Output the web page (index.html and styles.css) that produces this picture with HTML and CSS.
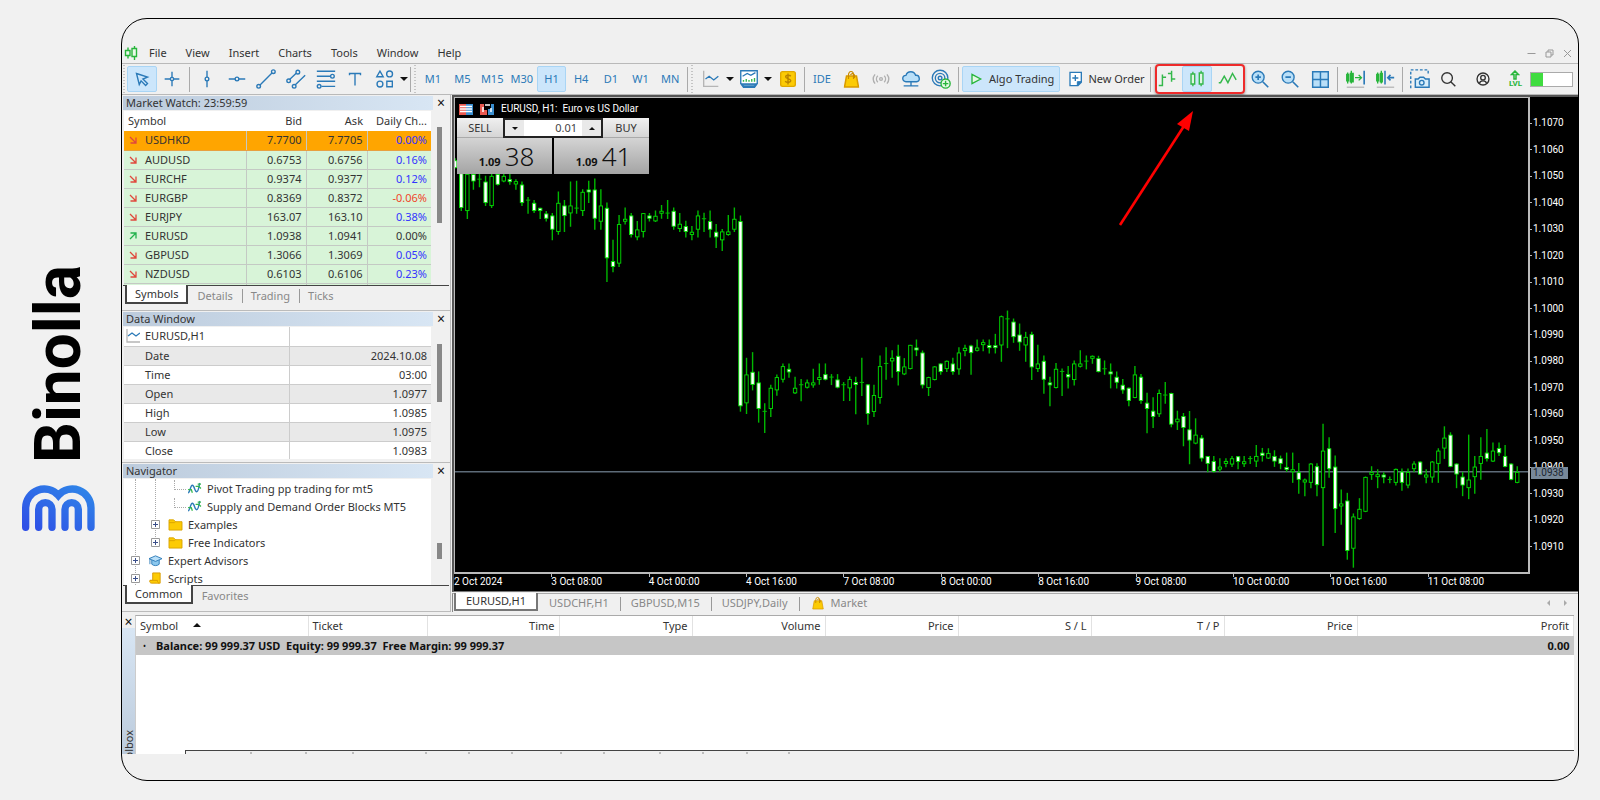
FILE: index.html
```html
<!DOCTYPE html>
<html lang="en">
<head>
<meta charset="utf-8">
<title>EURUSD, H1</title>
<link rel="stylesheet" href="styles.css">
</head>
<body>
<svg class="defs" aria-hidden="true">
  <defs>
    <linearGradient id="brandfill" x1="0" y1="1" x2="1" y2="0"><stop offset="0" stop-color="#2f4fe6"/><stop offset="1" stop-color="#2f86e8"/></linearGradient>
    <symbol id="down" viewBox="0 0 8 8"><path d="M1 1L7 7M7 1.500V7H1.500" fill="none" stroke="#e0473c" stroke-width="1.300"/></symbol>
    <symbol id="up" viewBox="0 0 8 8"><path d="M1 7L7 1M1.500 1H7V6.500" fill="none" stroke="#22b14c" stroke-width="1.300"/></symbol>
    <symbol id="folder" viewBox="0 0 16 14"><path d="M1 2h5l2 2h7v9H1z" fill="#fccb05" stroke="#d9a300"/><path d="M1 5h6l1.500-1.500" fill="none" stroke="#d9a300"/></symbol>
    <symbol id="indi" viewBox="0 0 14 12"><path d="M1 10C3 10 3 3 5 3s2 6 4 6 2-6 3-8" fill="none" stroke="#2b7ab8" stroke-width="1.300"/><path d="M1 7h3l1 3M8 4h3l2 2M10 2h3" fill="none" stroke="#34b84b" stroke-width="1.200"/></symbol>
    <symbol id="bag" viewBox="0 0 16 18"><path d="M3 6h10l2 11H1z" fill="#fccb05" stroke="#d99b00"/><path d="M5 9V5a2.500 3.500 0 0 1 5 0v4M7 5a2.500 3.500 0 0 1 4 0v3" fill="none" stroke="#c98a00" stroke-width="1.200"/></symbol>
    <symbol id="plusbox" viewBox="0 0 9 9"><path d="M.5 .5h8v8h-8z" fill="#fff" stroke="#9a9a9a"/><path d="M2 4.500h5M4.500 2v5" stroke="#3b4f8a"/></symbol>
  </defs>
</svg>
<div class="stage">
  <aside class="brand">
    <span class="brand-name">Binolla</span>
    <svg class="brand-logo" viewBox="63 732 225 144"><g fill="none" stroke="url(#brandfill)" stroke-width="22" stroke-linecap="round" stroke-linejoin="miter"><path d="M77 862V803A56 56 0 0 1 175 766A56 56 0 0 1 273 803V862M116 862V808A20 20 0 0 1 156 808V862M195 862V808A20 20 0 0 1 235 808V862"/></g></svg>
  </aside>

  <main class="frame">
    <header class="menubar">
      <svg class="app-icon" viewBox="0 0 14 14"><g fill="#e9f9e9" stroke="#27b53a" stroke-width="1.400"><path d="M4 1.500v11M10.500 0v14"/><path d="M1.500 4.500h4.500v5H1.500zM8 2.500h4.500v8H8z"/></g></svg>
      <nav class="menu">
        <button>File</button><button>View</button><button>Insert</button><button>Charts</button><button>Tools</button><button>Window</button><button>Help</button>
      </nav>
      <div class="winctl">
        <button aria-label="Minimize"><svg viewBox="0 0 9 9"><path d="M0.500 4.500h8"/></svg></button>
        <button aria-label="Restore"><svg viewBox="0 0 9 9"><path d="M1 3h5v5H1zM3 3V1h5v5H6"/></svg></button>
        <button aria-label="Close"><svg viewBox="0 0 9 9"><path d="M1 1l7 7M8 1L1 8"/></svg></button>
      </div>
    </header>

    <div class="toolbar">
      <span class="grip"></span>
      <div class="group g2">
        <button class="on" aria-label="Cursor"><svg viewBox="0 0 24 24"><path d="M6 6l12 4-5 2 5 5-2 2-5-5-2 4z"/></svg></button>
        <button aria-label="Crosshair"><svg viewBox="0 0 24 24"><path d="M12 4v6M12 14v6M4 12h6M14 12h6"/><circle cx="12" cy="12" r="1.800"/></svg></button>
      </div>
      <span class="sep"></span>
      <div class="group g7">
        <button aria-label="Vertical line"><svg viewBox="0 0 24 24"><path d="M12 3v7M12 14v7"/><circle cx="12" cy="12" r="2"/></svg></button>
        <button aria-label="Horizontal line"><svg viewBox="0 0 24 24"><path d="M3 12h7M14 12h7"/><circle cx="12" cy="12" r="2"/></svg></button>
        <button aria-label="Trendline"><svg viewBox="0 0 24 24"><path d="M5.500 18.500L18.500 5.500"/><circle cx="4" cy="20" r="2"/><circle cx="20" cy="4" r="2"/></svg></button>
        <button aria-label="Channel"><svg viewBox="0 0 24 24"><path d="M5 12.500l7.500-7M11 18.500L22 8"/><circle cx="4" cy="14" r="2"/><circle cx="14" cy="4.500" r="2"/><circle cx="10" cy="20" r="2"/></svg></button>
        <button aria-label="Fibonacci"><svg viewBox="0 0 24 24"><path d="M2 3.500h20M2 9h15M2 14.500h20M7 20h15"/><circle cx="19" cy="9" r="2"/><circle cx="4.500" cy="20" r="2"/></svg></button>
        <button aria-label="Text"><svg viewBox="0 0 24 24"><path d="M6 8V6h12v2M12 6v13"/></svg></button>
        <button aria-label="Shapes"><svg viewBox="0 0 24 24"><path d="M6.500 3.500l3.500 6H3zM14 14.500h6v6h-6z"/><circle cx="17" cy="6.500" r="3.200"/><circle cx="6.500" cy="17.500" r="3.200"/></svg></button>
      </div>
      <span class="caret"></span>
      <span class="sep"></span><span class="grip"></span>
      <div class="group g9">
        <button>M1</button><button>M5</button><button>M15</button><button>M30</button><button class="on">H1</button><button>H4</button><button>D1</button><button>W1</button><button>MN</button>
      </div>
      <span class="sep"></span><span class="grip"></span>
      <div class="group pairs">
        <button aria-label="Chart type"><svg viewBox="0 0 24 24"><path d="M4 3v17h16" stroke="#b5b5b5"/><path d="M6 12l4-3 5 4 5-4"/></svg></button><span class="caret"></span>
        <button aria-label="Indicators"><svg viewBox="0 0 24 24"><path d="M3 3h18v14l-3 4H6l-3-4z" fill="#fff"/><path d="M4 17.500h16L17.500 20.500h-11z" fill="#5b9bc8"/><path d="M5 9l5-3 4 2 5-3"/><path d="M6 15v-2M9 15v-3M12 15v-2M15 15v-3M18 15v-4" stroke="#34b84b"/></svg></button><span class="caret"></span>
        <button aria-label="Trading"><svg viewBox="0 0 24 24"><rect x="4" y="4" width="16" height="16" rx="2" fill="#fccb05" stroke="#e0a800"/><path d="M15 9c-1-1.500-5.500-1.500-5.500.7s5.500 1.500 5.500 4-5 2.300-6 .6M12 6v12" stroke="#b98300"/></svg></button>
      </div>
      <span class="sep"></span>
      <div class="group g5">
        <button>IDE</button>
        <button class="market-icon" aria-label="Market"><svg viewBox="0 0 16 18"><use href="#bag"/></svg></button>
        <button aria-label="Signals"><svg viewBox="0 0 24 24"><g stroke="#b0b0b0"><circle cx="12" cy="12" r="1.500"/><path d="M8.500 8.500a5 5 0 0 0 0 7M15.500 8.500a5 5 0 0 1 0 7M5.500 7a8 8 0 0 0 0 10M18.500 7a8 8 0 0 1 0 10"/></g></svg></button>
        <button aria-label="Cloud"><svg viewBox="0 0 24 24"><path d="M6.500 15a3.500 3.500 0 0 1 0-7 5.500 5.500 0 0 1 10.500 0 3.500 3.500 0 0 1 1 7z" fill="#b9dff8"/><path d="M12 15v4M4 19.500h16"/></svg></button>
        <button aria-label="Copy trading"><svg viewBox="0 0 24 24"><circle cx="11" cy="11" r="8.500"/><circle cx="11" cy="11" r="5.200"/><circle cx="11" cy="11" r="2"/><circle cx="17" cy="17" r="5" fill="#e4f8e4" stroke="#27b53a"/><path d="M17 14v6M14 17h6" stroke="#27b53a"/></svg></button>
      </div>
      <span class="sep"></span>
      <button class="wide on"><svg viewBox="0 0 24 24"><path d="M6 5l13 7-13 7z" fill="#e4f8e4" stroke="#27b53a" stroke-width="2"/></svg>Algo Trading</button>
      <button class="wide"><svg viewBox="0 0 24 24"><path d="M3 2h17v15l-5 5H3z" fill="#fff" stroke-width="2"/><path d="M20 16h-6v6z" fill="#2b7ab8"/><path d="M11 6v9M6.500 10.500h9" stroke-width="2"/></svg>New Order</button>
      <span class="sep"></span>
      <div class="group g3 marked">
        <button aria-label="Bar chart"><svg viewBox="0 0 24 24"><path d="M3 19h4M7 7v13M7 10h4M13 6h4M17 3v12M17 12h4" stroke="#34b84b" stroke-width="1.600"/></svg></button>
        <button class="on" aria-label="Candlesticks"><svg viewBox="0 0 24 24"><path d="M7.500 4v16M16.500 3v17" stroke="#34b84b"/><path d="M5.500 6.500h4v11h-4zM14.500 5.500h4v12h-4z" fill="#dff5e3" stroke="#34b84b" stroke-width="1.500"/></svg></button>
        <button aria-label="Line chart"><svg viewBox="0 0 24 24"><path d="M3 16h2l4-7 4 7 5-10 4 7" stroke="#34b84b" stroke-width="1.600"/></svg></button>
      </div>
      <div class="group g3">
        <button aria-label="Zoom in"><svg viewBox="0 0 24 24"><circle cx="10" cy="10" r="6.500" fill="#b9dff8"/><path d="M15 15l6 6M10 7v6M7 10h6" stroke-width="1.800"/></svg></button>
        <button aria-label="Zoom out"><svg viewBox="0 0 24 24"><circle cx="10" cy="10" r="6.500" fill="#b9dff8"/><path d="M15 15l6 6M7 10h6" stroke-width="1.800"/></svg></button>
        <button aria-label="Tile windows"><svg viewBox="0 0 24 24"><path d="M4 4h17v17H4zM12.500 4v17M4 12.500h17" fill="#b9dff8" stroke-width="1.600"/></svg></button>
      </div>
      <span class="sep"></span>
      <div class="group g2">
        <button aria-label="Auto scroll"><svg viewBox="0 0 24 24"><path d="M4 5v12M8 3v14" stroke="#27b53a"/><path d="M3 7h2v7H3zM7 6h3v9H7z" fill="#27b53a" stroke="#27b53a"/><path d="M12 10.500h7M16 7.500l3 3-3 3" stroke="#27b53a"/><path d="M22 3v15" stroke-width="1.800"/><path d="M3 21h19" stroke="#bdbdbd"/></svg></button>
        <button aria-label="Chart shift"><svg viewBox="0 0 24 24"><path d="M4 5v12M8 3v14" stroke="#27b53a"/><path d="M3 7h2v7H3zM7 6h2v9H7z" fill="#27b53a" stroke="#27b53a"/><path d="M12 3v15M22 10.500h-7M18 7.500l-3 3 3 3" stroke-width="1.700"/><path d="M3 21h19" stroke="#bdbdbd"/></svg></button>
      </div>
      <span class="sep"></span>
      <div class="group last">
        <button aria-label="Screenshot"><svg viewBox="0 0 24 24"><path d="M3 22V2h19v5" stroke-dasharray="3 2"/><path d="M8 21v-9h3l2-2h4l2 2h4v9z" fill="#d8eefb" stroke-width="1.600"/><circle cx="15" cy="16" r="2.500"/></svg></button>
        <button aria-label="Search"><svg viewBox="0 0 24 24"><g stroke="#333"><circle cx="11" cy="11" r="5.800"/><path d="M15 15l5 5"/></g></svg></button>
        <button aria-label="Account"><svg viewBox="0 0 24 24"><g stroke="#333"><circle cx="12" cy="12" r="6.500"/><circle cx="12" cy="10.500" r="2.500"/><path d="M8 17c1-4 7-4 8 0"/></g></svg></button>
        <span class="lvl"><svg viewBox="0 0 10 10"><path d="M5 1l3.500 3.500H6V9H4V4.500H1.500z"/></svg>LVL</span>
        <span class="level"><span></span></span>
      </div>
    </div>

    <div class="workspace">
      <div class="side">
        <section class="panel market">
          <div class="title"><h2>Market Watch: 23:59:59</h2><button aria-label="Close">×</button></div>
          <div class="body">
            <table class="quotes">
              <colgroup><col class="c-sym"><col class="c-bid"><col class="c-ask"><col></colgroup>
              <thead><tr><th>Symbol</th><th>Bid</th><th>Ask</th><th>Daily Ch...</th></tr></thead>
              <tbody>
                <tr class="hot"><td><svg><use href="#down"/></svg>USDHKD</td><td>7.7700</td><td>7.7705</td><td class="pos">0.00%</td></tr>
                <tr><td><svg><use href="#down"/></svg>AUDUSD</td><td>0.6753</td><td>0.6756</td><td class="pos">0.16%</td></tr>
                <tr><td><svg><use href="#down"/></svg>EURCHF</td><td>0.9374</td><td>0.9377</td><td class="pos">0.12%</td></tr>
                <tr><td><svg><use href="#down"/></svg>EURGBP</td><td>0.8369</td><td>0.8372</td><td class="neg">-0.06%</td></tr>
                <tr><td><svg><use href="#down"/></svg>EURJPY</td><td>163.07</td><td>163.10</td><td class="pos">0.38%</td></tr>
                <tr><td><svg><use href="#up"/></svg>EURUSD</td><td>1.0938</td><td>1.0941</td><td>0.00%</td></tr>
                <tr><td><svg><use href="#down"/></svg>GBPUSD</td><td>1.3066</td><td>1.3069</td><td class="pos">0.05%</td></tr>
                <tr><td><svg><use href="#down"/></svg>NZDUSD</td><td>0.6103</td><td>0.6106</td><td class="pos">0.23%</td></tr>
                <tr><td></td><td></td><td></td><td></td></tr>
              </tbody>
            </table>
            <div class="track"><span class="thumb thumb-quotes"></span></div>
          </div>
          <div class="tabs"><button class="active">Symbols</button><button>Details</button><button>Trading</button><button>Ticks</button></div>
        </section>

        <section class="panel data">
          <div class="title"><h2>Data Window</h2><button aria-label="Close">×</button></div>
          <div class="body">
            <table class="values">
              <colgroup><col class="c-name"><col></colgroup>
              <tbody>
                <tr><td><svg class="mini" viewBox="0 0 14 14"><path d="M1 0v13h13" stroke="#b5b5b5"/><path d="M2 7l4-3 4 3 4-3" stroke="#2b7ab8"/></svg>EURUSD,H1</td><td></td></tr>
                <tr><td>Date</td><td>2024.10.08</td></tr>
                <tr><td>Time</td><td>03:00</td></tr>
                <tr><td>Open</td><td>1.0977</td></tr>
                <tr><td>High</td><td>1.0985</td></tr>
                <tr><td>Low</td><td>1.0975</td></tr>
                <tr><td>Close</td><td>1.0983</td></tr>
              </tbody>
            </table>
            <div class="track"><span class="thumb thumb-values"></span></div>
          </div>
        </section>

        <section class="panel navigator">
          <div class="title"><h2>Navigator</h2><button aria-label="Close">×</button></div>
          <div class="body">
            <ul class="tree">
              <li class="l3"><svg><use href="#indi"/></svg>Pivot Trading pp trading for mt5</li>
              <li class="l3 end"><svg><use href="#indi"/></svg>Supply and Demand Order Blocks MT5</li>
              <li class="l2"><svg class="box"><use href="#plusbox"/></svg><svg><use href="#folder"/></svg>Examples</li>
              <li class="l2"><svg class="box"><use href="#plusbox"/></svg><svg><use href="#folder"/></svg>Free Indicators</li>
              <li class="l1"><svg class="box"><use href="#plusbox"/></svg><svg viewBox="0 0 16 14"><path d="M4 6v5c2 2 6 2 8 0V6" fill="#8cc8ee" stroke="#2b7ab8"/><path d="M1 5l7-3 7 3-7 3zM2 5v6" fill="#b9dff8" stroke="#2b7ab8"/></svg>Expert Advisors</li>
              <li class="l1"><svg class="box"><use href="#plusbox"/></svg><svg viewBox="0 0 16 14"><path d="M5 1h8v11H4a2 2 0 0 1-2-3h3z" fill="#fccb05" stroke="#d99b00"/><path d="M2 9h8c0 2 1 3 2 3" fill="#fccb05" stroke="#d99b00"/></svg>Scripts</li>
            </ul>
            <div class="track"><span class="thumb thumb-tree"></span></div>
          </div>
          <div class="tabs"><button class="active">Common</button><button>Favorites</button></div>
        </section>
      </div>

      <div class="center">
        <section class="chart">
          <div class="plot">
            <svg class="candles" id="candles" viewBox="455 98 1075 475" preserveAspectRatio="none"></svg>
            <div class="chart-title">
              <svg viewBox="0 0 14 11"><path d="M0 0h7v11H0z" fill="#e8584f"/><path d="M7 0h7v11H7z" fill="#3b8fd0"/><path d="M1 2.500h12M1 5h12M1 7.500h12" stroke="#fff" stroke-width="1.300"/></svg>
              <svg viewBox="0 0 14 11"><path d="M0 0h4v6h3v5H0z" fill="#e8584f"/><path d="M14 0h-3v5H8v6h6z" fill="#3b8fd0"/><path d="M5 1h5M3 3v5M11 4v4" stroke="#fff" stroke-width="1.500"/></svg>
              <span>EURUSD, H1:&nbsp; Euro vs US Dollar</span>
            </div>
            <div class="trade">
              <div class="trade-top">
                <button>SELL</button>
                <div class="lot"><button aria-label="Decrease volume"><span class="caret small"></span></button><input type="text" value="0.01" aria-label="Volume"><button aria-label="Increase volume"><span class="caret small flip"></span></button></div>
                <button>BUY</button>
              </div>
              <div class="trade-px"><div><b>1.09</b><span>38</span></div><div><b>1.09</b><span>41</span></div></div>
            </div>
          </div>
          <div class="prices">
            <span>1.1070</span><span>1.1060</span><span>1.1050</span><span>1.1040</span><span>1.1030</span><span>1.1020</span><span>1.1010</span><span>1.1000</span><span>1.0990</span><span>1.0980</span><span>1.0970</span><span>1.0960</span><span>1.0950</span><span>1.0940</span><span>1.0930</span><span>1.0920</span><span>1.0910</span>
            <em class="now">1.0938</em>
          </div>
          <div class="times">
            <span>2 Oct 2024</span><span>3 Oct 08:00</span><span>4 Oct 00:00</span><span>4 Oct 16:00</span><span>7 Oct 08:00</span><span>8 Oct 00:00</span><span>8 Oct 16:00</span><span>9 Oct 08:00</span><span>10 Oct 00:00</span><span>10 Oct 16:00</span><span>11 Oct 08:00</span>
          </div>
          <svg class="arrow" viewBox="0 0 80 120"><path d="M4 116L68 17" stroke="#f00" stroke-width="2.600"/><path d="M77 2L73 22 61 15z" fill="#f00"/></svg>
        </section>
        <div class="tabs chart-tabs">
          <button class="active">EURUSD,H1</button><button>USDCHF,H1</button><button>GBPUSD,M15</button><button>USDJPY,Daily</button><button class="shop"><svg><use href="#bag"/></svg>Market</button>
          <span class="pager"><i></i><i></i></span>
        </div>
      </div>
    </div>

    <section class="toolbox">
      <div class="tb-side"><button aria-label="Close">×</button><div class="tb-strip"><div class="tb-label"><span>Toolbox</span></div></div></div>
      <div class="tb-main">
        <table class="trades">
          <colgroup><col class="w-sym"><col class="w-tic"><col class="w-time"><col class="w"><col class="w"><col class="w"><col class="w"><col class="w"><col class="w"><col></colgroup>
          <thead><tr><th>Symbol<span class="caret flip"></span></th><th>Ticket</th><th>Time</th><th>Type</th><th>Volume</th><th>Price</th><th>S / L</th><th>T / P</th><th>Price</th><th>Profit</th></tr></thead>
          <tbody><tr><td colspan="9"><i>•</i>Balance: 99 999.37 USD&nbsp; Equity: 99 999.37&nbsp; Free Margin: 99 999.37</td><td>0.00</td></tr></tbody>
        </table>
        <div class="tb-foot"><svg viewBox="0 0 640 3"><path d="M65 1v2M120 1v2M167 1v2M240 1v2M283 1v2M326 1v2M375 1v2M418 1v2M474 1v2M517 1v2M561 1v2M603 1v2" stroke="#888"/></svg></div>
      </div>
    </section>
  </main>
</div>
<script src="chart.js"></script>
</body>
</html>
```
FILE: styles.css
```css
* { box-sizing: border-box; }
body { margin: 0; background: #f1f1f1; color: #333; font: 11px/14px "Noto Sans", "Open Sans", sans-serif; }
button { margin: 0; padding: 0; border: 0; background: none; font: inherit; color: inherit; }
h2 { margin: 0; font: inherit; }
table { border-collapse: collapse; table-layout: fixed; width: 100%; }
th { font-weight: 400; }
svg { display: block; flex: none; }
.defs { position: absolute; width: 0; height: 0; }

.stage { display: grid; grid-template-columns: 121px 1fr; height: 100vh; min-height: 700px; padding: 18px 21px 19px 0; }

.brand { display: flex; flex-direction: column; align-items: center; justify-content: center; gap: 22px; padding: 0 4px 2px 0; }
.brand-name { writing-mode: vertical-rl; transform: rotate(180deg); font: 700 64px/64px Roboto, sans-serif; color: #000; }
.brand-logo { width: 75px; height: 48px; }

.frame { display: flex; flex-direction: column; min-width: 0; overflow: hidden; border: 1px solid #000; border-radius: 26px; padding: 24px 0 26px; background: #f0f0f0; }

.menubar { display: flex; align-items: center; height: 21px; padding: 0 6px 0 2px; border-bottom: 1px solid #b9b9b9; }
.app-icon { width: 14px; height: 14px; }
.menu { display: flex; gap: 19px; margin-left: 11px; }
.winctl { display: flex; gap: 9px; margin-left: auto; }
.winctl svg { width: 9px; height: 9px; fill: none; stroke: #999; }

.toolbar { display: flex; align-items: center; height: 31px; border-bottom: 1px solid #b9b9b9; color: #2b7ab8; }
.toolbar svg { width: 22px; height: 22px; fill: none; stroke: #2b7ab8; stroke-width: 1.500; }
.toolbar .market-icon svg { width: 17px; height: 18px; }
.toolbar button { display: flex; align-items: center; justify-content: center; height: 26px; border: 1px solid transparent; border-radius: 2px; }
.toolbar .on { background: #cce6fb; border-color: #a9d5f5; }
.group { display: grid; flex: none; }
.g2 { grid-template-columns: 1fr 1fr; width: 60px; }
.g3 { grid-template-columns: repeat(3, 1fr); width: 89px; }
.g5 { grid-template-columns: repeat(5, 1fr); width: 149px; }
.g7 { grid-template-columns: repeat(7, 1fr); width: 208px; }
.g9 { grid-template-columns: repeat(9, 1fr); width: 267px; }
.marked { position: relative; margin-right: 4px; }
.marked::after { content: ""; position: absolute; inset: -2px -3px -2px 2px; border: 2px solid #ee2b2b; border-radius: 4px; box-shadow: 0 1px 3px #0006; }
.sep { flex: none; width: 1px; height: 25px; margin: 0 2px; background: #aaa; }
.grip { flex: none; width: 2px; height: 28px; margin: 0 2px 0 1px; background: repeating-linear-gradient(#c4c4c4 0 1px, transparent 1px 3px); }
.caret { flex: none; display: inline-block; border: 4px solid transparent; border-top-color: #111; border-bottom: 0; }
.caret.flip { border-bottom: 4px solid #111; border-top: 0; }
.caret.small { border-left-width: 3px; border-right-width: 3px; border-top-width: 3px; }
.caret.small.flip { border-bottom-width: 3px; border-top-width: 0; }
.pairs { display: flex; align-items: center; gap: 3px; padding: 0 2px 0 4px; }
.pairs button { width: 24px; }
.pairs button:last-child { margin-left: 1px; }
.wide { flex: none; gap: 4px; padding: 0 2px 0 5px; color: #333; }
.toolbar .wide svg { width: 16px; height: 16px; }
.toolbar .wide.on { padding: 0 5px; margin: 0 2px 0 1px; gap: 5px; }
.last { display: flex; flex: 1; align-items: center; padding-right: 5px; }
.last button { flex: none; width: 29px; }
.last button:nth-child(3) { margin-left: 6px; }
.lvl { display: flex; flex-direction: column; align-items: center; margin-left: auto; color: #27b53a; font: 700 8px/8px Roboto, sans-serif; }
.toolbar .lvl svg { width: 10px; height: 10px; stroke: #27b53a; fill: #e4f8e4; }
.level { width: 43px; height: 15px; margin-left: 8px; border: 1px solid #aaa; background: #fff; }
.level span { display: block; width: 30%; height: 100%; background: #3fdc3f; }

.workspace { display: flex; flex: 1; min-height: 0; }
.side { display: flex; flex-direction: column; flex: none; width: 329px; border-right: 1px solid #bbb; }
.panel { display: flex; flex-direction: column; min-height: 0; padding: 1px 1px 0 1px; border-bottom: 1px solid #bbb; }
.market { flex: 218 1 0; }
.data { flex: 149 1 0; padding-bottom: 3px; }
.navigator { flex: 149 1 0; padding-bottom: 1px; }
.title { display: flex; flex: none; align-items: flex-start; height: 15px; }
.title h2 { flex: 1; height: 14px; padding-left: 3px; background: linear-gradient(90deg, #bccbdc, #d8e6f4); }
.title button { width: 16px; font-size: 14px; line-height: 14px; color: #111; }
.body { display: flex; flex: 1; min-height: 0; overflow: hidden; padding-left: 1px; }
.body > table, .tree { flex: 1; align-self: flex-start; background: #fff; }
.track { flex: none; width: 18px; padding-left: 6px; }
.thumb { display: block; width: 5px; background: #888; }
.thumb-quotes { height: 96px; margin-top: 16px; }
.thumb-values { height: 58px; margin-top: 17px; }
.thumb-tree { height: 16px; margin-top: 64px; }

.quotes th { height: 20px; padding: 0 4px; text-align: right; }
.quotes th:first-child { text-align: left; }
.quotes td { height: 19px; padding: 0 4px; text-align: right; background: #d8f4d8; border-bottom: 1px solid #c4c9c4; border-right: 1px solid #c4c9c4; }
.quotes td:last-child { border-right: 0; }
.quotes td:first-child { text-align: left; padding-left: 5px; }
.quotes svg { display: inline-block; width: 8px; height: 8px; margin-right: 8px; }
.quotes .hot td { background: #ffa500; border-bottom-color: #e8a040; }
.quotes .pos { color: #33f; }
.quotes .neg { color: #f0452b; }
.c-sym { width: 122px; } .c-bid { width: 60px; } .c-ask { width: 61px; }
.values td { height: 19px; padding: 0 4px; text-align: right; border-bottom: 1px solid #ccc; }
.values td:first-child { position: relative; padding-left: 21px; text-align: left; border-right: 1px solid #ccc; }
.values tr:nth-child(even) { background: #e9e9e9; }
.c-name { width: 165px; }
.mini { position: absolute; left: 2px; top: 2px; width: 14px; height: 14px; fill: none; stroke-width: 1.300; }

.tree { position: relative; margin: 0; padding: 1px 0 0; list-style: none; height: 112px; }
.tree::before, .tree::after { content: ""; position: absolute; top: 0; border-left: 1px dotted #aaa; }
.tree::before { left: 11px; height: 112px; }
.tree::after { left: 31px; height: 66px; }
.tree li { position: relative; display: flex; align-items: center; gap: 5px; height: 18px; }
.tree li svg { width: 15px; height: 13px; }
.tree li .box { z-index: 1; width: 9px; height: 9px; margin-right: 3px; }
.tree .l1 { padding-left: 7px; } .tree .l2 { padding-left: 27px; } .tree .l3 { padding-left: 63px; }
.tree .l3::before { content: ""; position: absolute; left: 50px; top: 0; width: 11px; height: 9px; border-left: 1px dotted #aaa; border-bottom: 1px dotted #aaa; }

.tabs { display: flex; flex: none; height: 25px; border-top: 1px solid #444; color: #888; }
.tabs button { height: 19px; padding: 0 9px; }
.tabs button + button { position: relative; }
.tabs .active { margin: -1px 0 0 2px; padding: 0 8px; background: #fff; color: #333; border: 1px solid #444; border-top: 0; border-width: 0 2px 2px; }
.tabs button + button + button::before { content: ""; position: absolute; left: 0; top: 3px; height: 14px; border-left: 1px solid #999; }

.center { display: flex; flex-direction: column; flex: 1; min-width: 0; }
.chart { position: relative; display: grid; grid-template: 1fr 17px / 1fr 48px; flex: 1; min-height: 0; margin-left: 1px; border: 2px solid #555; border-right: 0; border-bottom: 1px solid #777; background: #000; color: #fff; font: 10px/12px Roboto, sans-serif; }
.plot { position: relative; min-width: 0; min-height: 0; border: 1px solid #bbb; border-width: 1px 2px 2px 1px; }
.candles { position: absolute; inset: 0; width: 100%; height: 100%; }
.chart-title { position: relative; display: flex; align-items: center; gap: 7px; padding: 5px 0 3px 4px; }
.chart-title svg { width: 14px; height: 11px; }
.trade { position: relative; width: 192px; margin-left: 2px; color: #333; }
.trade-top { display: flex; height: 20px; background: linear-gradient(#f0f0f0, #d4d4d4); font: 11px/14px "Noto Sans", sans-serif; }
.trade-top > button { flex: 1; border-bottom: 1px solid #aaa; }
.lot { display: flex; flex: none; width: 100px; border: 2px solid #222; }
.lot button { display: flex; align-items: center; justify-content: center; width: 19px; background: #e9e9e9; }
.lot input { flex: 1; min-width: 0; border: 0; padding: 0 5px; background: #fff; font: inherit; color: #444; text-align: right; }
.trade-px { display: grid; grid-template-columns: 1fr 1fr; gap: 2px; background: #000; }
.trade-px div { display: flex; align-items: baseline; justify-content: center; gap: 4px; height: 36px; padding-left: 4px; background: linear-gradient(#d4d4d4, #a4a4a4); color: #111; font: 26px/36px "Noto Sans", sans-serif; }
.trade-px span { font-weight: 300; }
.trade-px b { font-size: 11px; }
.prices { position: relative; display: grid; grid-auto-rows: 1fr; padding: 13px 0 14px; }
.prices span { display: flex; align-items: center; gap: 1px; }
.prices span::before { content: ""; width: 2px; border-top: 1px solid #bbb; }
.now { position: absolute; left: 1px; top: 79%; margin-top: -7px; width: 37px; padding-left: 2px; background: #778899; color: #1b2530; font-style: normal; }
.times { grid-column: 1; display: grid; grid-template-columns: repeat(11, 1fr); padding-right: 5px; white-space: nowrap; }
.times span { position: relative; padding-top: 2px; }
.times span + span::before { content: ""; position: absolute; left: 0; top: 0; height: 3px; border-left: 1px solid #bbb; }
.arrow { position: absolute; right: 382px; top: 12px; width: 80px; height: 120px; fill: none; }

.chart-tabs { height: 19px; margin-top: 1px; border-top-color: #aaa; border-left: 1px solid #888; margin-left: 1px; }
.chart-tabs button { padding: 0 11px; height: 18px; }
.chart-tabs .active { margin-left: 1px; padding: 0 10px; border-color: #777; }
.chart-tabs .shop { display: flex; align-items: center; gap: 7px; padding-left: 13px; }
.shop svg { width: 12px; height: 14px; }
.pager { display: flex; align-items: center; gap: 14px; margin-left: auto; padding-right: 11px; }
.pager i { border: 3px solid transparent; border-right-color: #aaa; border-left: 0; }
.pager i + i { border-left: 3px solid #aaa; border-right: 0; }

.toolbox { display: flex; flex: none; height: 139px; margin: 3px 4px 0 0; }
.tb-side { display: flex; flex-direction: column; width: 13px; }
.tb-side button { height: 13px; font-size: 14px; line-height: 12px; color: #111; }
.tb-strip { display: flex; flex: 1; flex-direction: column; justify-content: flex-end; background: linear-gradient(#d8e6f4, #bccbdc); }
.tb-label { height: 24px; overflow: hidden; }
.tb-label span { writing-mode: vertical-rl; transform: rotate(180deg); line-height: 13px; }
.tb-main { display: flex; flex: 1; flex-direction: column; min-width: 0; border-top: 1px solid #aaa; border-left: 1px solid #ccc; background: #fff; }
.trades th { height: 20px; padding: 0 4px; text-align: right; border-right: 1px solid #e2e2e2; }
.trades th:nth-child(-n+2) { text-align: left; }
.trades th .caret { margin: 0 0 3px 15px; }
.trades td { height: 19px; padding: 0 4px; background: #c6c6c6; color: #111; font-weight: 700; }
.trades td:last-child { text-align: right; }
.trades i { display: inline-block; width: 14px; padding-left: 3px; margin-right: 2px; font: 8px/8px "Noto Sans", sans-serif; vertical-align: 1px; }
.w-sym { width: 172px; } .w-tic { width: 119px; } .w-time { width: 132px; } .w { width: 133px; }
.tb-foot { margin: auto 0 0 49px; height: 4px; border-top: 1px solid #444; border-left: 1px solid #444; background: #f0f0f0; }
.tb-foot svg { width: 640px; height: 3px; }
```
FILE: chart.js
```js
// Hourly candles: [high, bodyTop, bodyBottom, low, kind], in thirds of a pixel below the block's base line.
// kind: 1 = falling (filled), 0 = rising (hollow), 2 = doji
const blocks = [
  { first: -1, base: 90, bars: [
    [205,211,235,235,1],[200,250,355,364,1],[250,252,364,388,0],[250,252,275,300,1],[250,268,268,292,2],[258,275,340,349,1],
    [250,258,349,355,0],[250,252,285,287,1],[252,258,275,277,0],[252,268,275,285,1],[268,274,284,300,0],[275,284,340,349,1],
    [322,331,331,372,2],[331,339,364,370,1],[354,354,364,388,1],[364,371,387,395,1],[370,377,420,452,1],[305,339,427,435,0],
    [331,347,379,427,1],[275,347,371,411,0],[273,355,355,372,2],[298,306,364,379,0],[273,299,308,340,1],[266,299,387,420,1],
    [298,347,396,420,0],[338,354,506,577,1],[450,514,532,548,1],[376,403,522,532,0],[353,387,393,404,0],[370,377,436,443,1],
    [394,419,443,452,0],[370,370,427,443,0],[370,377,387,395,1],[362,378,395,397,0],[346,363,371,387,0],[331,370,370,388,2],
    [353,363,411,420,1],[370,402,418,427,0],[393,409,427,443,1],[409,426,436,452,0],[362,377,420,443,0],[369,387,387,427,2],
    [362,394,420,443,1],[403,426,443,475,1],[418,425,452,484,0],[376,425,436,438,0],[353,387,420,427,0],[377,394,951,967,1],
    [805,855,942,974,0],[788,847,887,903,1],[846,879,959,1000,1],[942,966,966,1031,2],[886,895,959,983,0],[855,863,903,919,0],
    [822,830,871,879,0],[822,838,849,865,1],[862,895,912,914,0],[869,886,886,936,2],[870,879,895,897,0],[838,879,886,895,0],
    [822,863,871,886,0],[822,854,871,873,1],[854,863,863,887,2],[854,870,895,897,1]
  ]},
  { first: 63, base: 290, bars: [
    [278,286,286,335,2],[261,269,297,335,0],[262,278,287,375,1],[205,279,279,320,2],[284,285,374,406,1],[286,317,368,383,0],
    [198,230,326,343,0],[173,222,222,271,2],[182,205,216,265,0],[166,199,248,288,1],[206,231,255,257,0],[166,166,239,240,0],
    [150,174,183,200,1],[183,189,288,297,1],[262,263,296,320,0],[230,231,272,273,0],[221,222,248,256,1],[213,214,239,248,0],
    [205,222,248,256,1],[173,189,240,256,0],[166,175,185,200,0],[166,168,191,256,1],[150,174,184,186,0],[150,158,167,185,0],
    [150,167,175,192,1],[133,167,175,192,1],[78,80,168,217,0],[63,88,88,176,2],[87,96,143,160,1],[102,135,159,184,1],
    [127,142,168,217,0],[127,134,234,272,1],[166,222,239,248,0],[198,214,271,313,1],[262,279,288,351,1],[221,238,296,297,0],
    [237,246,246,320,2],[230,254,264,297,1],[213,222,272,288,0],[182,222,232,234,0],[198,215,215,240,2],[198,199,206,223,0],
    [199,206,248,249,1],[213,238,238,256,2],[222,246,255,297,1],[246,262,280,297,1],[269,286,303,313,1],[294,295,335,351,1],
    [230,255,326,327,0],[254,262,335,343,1],[310,340,359,432,1],[324,364,383,416,1],[300,311,375,383,0],[278,317,317,343,2],
    [310,311,406,414,1],[364,388,399,422,0]
  ]},
  { first: 119, base: 390, bars: [
    [71,80,116,171,1],[65,120,154,225,1],[87,136,163,165,0],[137,145,208,217,1],[200,200,224,249,1],[200,215,248,250,1],
    [207,232,239,248,0],[207,215,222,234,0],[200,207,226,233,0],[200,201,218,240,1],[200,216,222,233,0],[200,208,208,224,2],
    [167,200,217,233,0],[176,190,200,217,1],[177,191,208,209,0],[183,200,217,233,1],[199,207,224,240,1],[190,233,240,248,1],
    [190,240,247,281,0],[221,249,272,314,1],[268,271,280,321,0],[221,223,281,297,0],[222,231,288,321,1],[103,184,297,471,0],
    [144,177,240,266,1],[199,232,360,432,1],[301,343,352,407,0],[311,334,486,512,1],[373,382,479,536,0],[327,359,390,392,0],
    [262,263,368,369,0],[231,248,255,272,0],[240,255,264,297,0],[249,256,265,282,1],[262,271,271,282,2],[238,239,281,289,0],
    [238,247,281,305,1],[238,248,289,297,0],[216,223,240,249,0],[216,217,256,257,1],[240,256,264,282,0],[215,217,265,281,0],
    [177,184,224,281,0],[111,145,178,209,0],[129,136,233,234,1],[222,223,256,297,1],[248,262,289,321,1],[136,271,297,330,0],
    [200,232,264,314,0],[144,200,224,272,0],[119,190,209,217,1],[160,184,217,218,0],[160,176,192,200,1],[167,200,233,234,1],
    [222,223,272,273,1],[231,248,281,282,0]
  ]}
];

const shapes = ['<path d="M455 472.500H1530" stroke="#5d6b78" stroke-width="1.500"/>'];
for (const block of blocks) {
  block.bars.forEach(([high, top, bottom, low, kind], n) => {
    const x = 461.3 + 6.08 * (block.first + n);
    const y = v => block.base + v / 3;
    shapes.push(`<path d="M${x.toFixed(2)} ${y(high).toFixed(2)}V${y(low).toFixed(2)}" stroke="#00b800" stroke-width="1.400"/>`);
    if (kind === 2) {
      shapes.push(`<path d="M${(x - 2.2).toFixed(2)} ${y(top).toFixed(2)}h4.400" stroke="#00b800"/>`);
      return;
    }
    const height = Math.max(2, y(bottom) - y(top) - 1);
    shapes.push(`<rect x="${(x - 1.7).toFixed(2)}" y="${(y(top) + 0.5).toFixed(2)}" width="3.400" height="${height.toFixed(2)}" fill="${kind ? '#fff' : '#000'}" stroke="#00e000" stroke-width="0.900"/>`);
  });
}
document.getElementById('candles').innerHTML = shapes.join('');
```
